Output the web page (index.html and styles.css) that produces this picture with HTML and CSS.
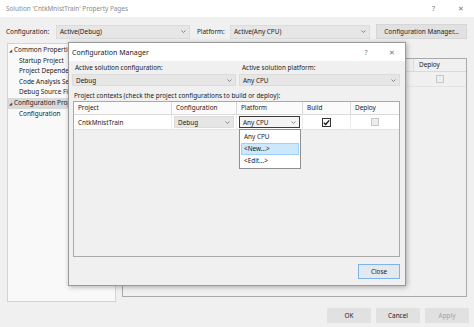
FILE: index.html
```html
<!DOCTYPE html>
<html lang="en">
<head>
  <meta charset="UTF-8" />
  <title>Solution 'CntkMnistTrain' Property Pages</title>
  <link rel="stylesheet" href="styles.css">
</head>
<body>

  <!-- Ventana de propiedades -->
  <div class="ventana">
    <div class="barra-titulo">
      <span class="titulo">Solution 'CntkMnistTrain' Property Pages</span>
      <span class="btn-caption">?</span>
      <span class="btn-caption">&#x2715;</span>
    </div>

    <div class="barra-config">
      <span class="etiqueta">Configuration:</span>
      <div class="combo combo-config">
        <span>Active(Debug)</span>
        <svg class="chevron" width="5" height="3" viewBox="0 0 5 3"><polyline points="0.5,0.5 2.5,2.5 4.5,0.5"/></svg>
      </div>
      <span class="etiqueta etiqueta-plataforma">Platform:</span>
      <div class="combo combo-plataforma">
        <span>Active(Any CPU)</span>
        <svg class="chevron" width="5" height="3" viewBox="0 0 5 3"><polyline points="0.5,0.5 2.5,2.5 4.5,0.5"/></svg>
      </div>
      <button class="boton boton-manager">Configuration Manager...</button>
    </div>

    <div class="paneles">
      <ul class="arbol">
        <li class="nodo"><span class="flecha">&#x25E2;</span>Common Properties</li>
        <li class="hoja">Startup Project</li>
        <li class="hoja">Project Dependencies</li>
        <li class="hoja">Code Analysis Settings</li>
        <li class="hoja">Debug Source Files</li>
        <li class="nodo seleccionado"><span class="flecha">&#x25E2;</span>Configuration Properties</li>
        <li class="hoja">Configuration</li>
      </ul>

      <!-- Tabla de fondo, casi toda tapada por el dialogo -->
      <div class="pagina">
        <div class="tabla-fondo">
          <div class="celda-fondo"></div>
          <div class="celda-fondo"></div>
          <div class="celda-fondo"></div>
          <div class="celda-fondo"></div>
          <div class="celda-fondo ultima">Deploy</div>
          <div class="fila-fondo"></div>
          <div class="fila-fondo"></div>
          <div class="fila-fondo"></div>
          <div class="fila-fondo"></div>
          <div class="fila-fondo ultima"><span class="check check-off"></span></div>
        </div>
      </div>
    </div>

    <div class="pie">
      <button class="boton">OK</button>
      <button class="boton">Cancel</button>
      <button class="boton deshabilitado">Apply</button>
    </div>
  </div>

  <!-- Dialogo Configuration Manager -->
  <div class="dialogo">
    <div class="dialogo-titulo">
      <span class="titulo">Configuration Manager</span>
      <span class="btn-caption">?</span>
      <span class="btn-caption">&#x2715;</span>
    </div>

    <div class="dialogo-cuerpo">
      <div class="columnas">
        <div class="columna">
          <span class="etiqueta-campo">Active solution configuration:</span>
          <div class="combo">
            <span>Debug</span>
            <svg class="chevron" width="5" height="3" viewBox="0 0 5 3"><polyline points="0.5,0.5 2.5,2.5 4.5,0.5"/></svg>
          </div>
        </div>
        <div class="columna">
          <span class="etiqueta-campo">Active solution platform:</span>
          <div class="combo">
            <span>Any CPU</span>
            <svg class="chevron" width="5" height="3" viewBox="0 0 5 3"><polyline points="0.5,0.5 2.5,2.5 4.5,0.5"/></svg>
          </div>
        </div>
      </div>

      <span class="etiqueta-contextos">Project contexts (check the project configurations to build or deploy):</span>

      <div class="tabla">
        <div class="cabecera">Project</div>
        <div class="cabecera">Configuration</div>
        <div class="cabecera">Platform</div>
        <div class="cabecera">Build</div>
        <div class="cabecera ultima">Deploy</div>

        <div class="celda">CntkMnistTrain</div>
        <div class="celda">
          <div class="combo combo-celda">
            <span>Debug</span>
            <svg class="chevron" width="5" height="3" viewBox="0 0 5 3"><polyline points="0.5,0.5 2.5,2.5 4.5,0.5"/></svg>
          </div>
        </div>
        <div class="celda celda-plataforma">
          <div class="combo combo-celda abierto">
            <span>Any CPU</span>
            <svg class="chevron" width="5" height="3" viewBox="0 0 5 3"><polyline points="0.5,0.5 2.5,2.5 4.5,0.5"/></svg>
          </div>
          <ul class="lista">
            <li>Any CPU</li>
            <li class="resaltado">&lt;New...&gt;</li>
            <li>&lt;Edit...&gt;</li>
          </ul>
        </div>
        <div class="celda centrada">
          <span class="check">
            <svg width="7" height="7" viewBox="0 0 7 7"><path d="M0.8 3.6 L2.7 5.5 L6.2 1.3"/></svg>
          </span>
        </div>
        <div class="celda centrada ultima"><span class="check check-off"></span></div>
      </div>

      <div class="acciones">
        <button class="boton boton-cerrar">Close</button>
      </div>
    </div>
  </div>

</body>
</html>
```

FILE: styles.css
```css
body {
  margin: 0;
  width: 474px;
  height: 327px;
  overflow: hidden;
  position: relative;
  background: #f0f0f0;
  font-family: 'Noto Sans', 'Liberation Sans', sans-serif;
  font-size: 6.4px;
  color: #1a1a1a;
}

ul {
  margin: 0;
  padding: 0;
  list-style: none;
}

.ventana {
  display: flex;
  flex-direction: column;
  height: 100%;
}

/* Barras de titulo */
.barra-titulo,
.dialogo-titulo {
  display: flex;
  align-items: center;
  background: #fff;
}

.barra-titulo {
  height: 17px;
  padding-left: 6px;
}

.titulo {
  flex: 1;
}

.barra-titulo .titulo {
  color: #8a8a8a;
}

.btn-caption {
  width: 27px;
  text-align: center;
  color: #777;
  font-size: 7px;
}

/* Fila de configuracion */
.barra-config {
  display: flex;
  align-items: center;
  height: 15px;
  margin-top: 7px;
  padding-left: 6px;
}

.etiqueta {
  width: 50px;
}

.etiqueta-plataforma {
  width: 33px;
  margin-left: 7px;
}

.combo {
  display: flex;
  align-items: center;
  justify-content: space-between;
  box-sizing: border-box;
  height: 12px;
  padding: 0 3px 0 3px;
  background: #e6e6e6;
  border: 1px solid #dcdcdc;
}

.barra-config .combo {
  height: 14px;
}

.combo-config {
  width: 134px;
}

.combo-plataforma {
  width: 140px;
}

.chevron {
  fill: none;
  stroke: #7a7a7a;
  stroke-width: 0.9;
}

.boton {
  box-sizing: border-box;
  height: 15px;
  padding: 0;
  font-family: inherit;
  font-size: 6.4px;
  color: #1a1a1a;
  background: #e1e1e1;
  border: 1px solid #d6d6d6;
}

.boton-manager {
  width: 91px;
  height: 15px;
  margin-left: 6px;
}

/* Paneles */
.paneles {
  display: flex;
  gap: 6px;
  height: 259px;
  margin-top: 4px;
  padding-left: 7px;
}

.arbol {
  box-sizing: border-box;
  width: 109px;
  padding-top: 1px;
  background: #f9f9f9;
  border: 1px solid #d4d4d4;
  white-space: nowrap;
  overflow: hidden;
}

.arbol li {
  height: 10.6px;
  line-height: 10.6px;
}

.nodo {
  padding-left: 1px;
}

.flecha {
  display: inline-block;
  width: 5px;
  font-size: 4px;
  color: #444;
}

.hoja {
  padding-left: 11px;
}

.seleccionado {
  background: #d9d9d9;
}

.pagina {
  width: 345px;
  height: 254px;
  padding-top: 15px;
  box-sizing: border-box;
}

.tabla-fondo {
  display: grid;
  grid-template-columns: 98px 65px 66px 62px 1fr;
  grid-template-rows: 13px 15px;
  height: 100%;
  box-sizing: border-box;
  border: 1px solid #a9a9a9;
  align-content: start;
}

.celda-fondo {
  padding-left: 5px;
  line-height: 12px;
  border-right: 1px solid #dadada;
  border-bottom: 1px solid #dadada;
}

.fila-fondo {
  display: flex;
  align-items: center;
  justify-content: center;
  border-bottom: 1px solid #e4e4e4;
}

.celda-fondo.ultima,
.cabecera.ultima,
.celda.ultima {
  border-right: none;
}

/* Pie */
.pie {
  display: flex;
  justify-content: flex-end;
  gap: 5px;
  margin-top: 6px;
  padding-right: 5px;
}

.pie .boton {
  width: 44px;
  border-color: #e1e1e1;
}

.deshabilitado {
  color: #a3a3a3;
}

/* Dialogo */
.dialogo {
  position: absolute;
  left: 68px;
  top: 42px;
  width: 338px;
  height: 244px;
  box-sizing: border-box;
  border: 1px solid #9a9a9a;
  background: #f0f0f0;
  box-shadow: 1px 1px 5px rgba(0, 0, 0, 0.3);
  display: flex;
  flex-direction: column;
}

.dialogo-titulo {
  height: 18px;
  padding-left: 3px;
  font-size: 7px;
}

.dialogo-titulo .btn-caption {
  width: 26px;
}

.dialogo-cuerpo {
  display: flex;
  flex-direction: column;
  padding: 2px 5px 0 3px;
}

.columnas {
  display: flex;
  gap: 3px;
}

.columna {
  display: flex;
  flex-direction: column;
  gap: 2px;
}

.columna:first-child {
  width: 164px;
}

.columna:last-child {
  flex: 1;
}

.etiqueta-campo {
  line-height: 9px;
  padding-left: 3px;
}

.etiqueta-contextos {
  line-height: 9px;
  margin-top: 5px;
  padding-left: 2px;
}

.tabla {
  display: grid;
  grid-template-columns: 98px 65px 66px 48px 1fr;
  grid-template-rows: 13px 15px;
  align-content: start;
  height: 156px;
  margin: 1px 0 0 1px;
  box-sizing: border-box;
  border: 1px solid #a9a9a9;
}

.cabecera {
  padding-left: 4px;
  line-height: 12px;
  background: #fbfbfb;
  border-right: 1px solid #dadada;
  border-bottom: 1px solid #dadada;
}

.celda {
  display: flex;
  align-items: center;
  background: #fff;
  padding-left: 4px;
  border-right: 1px solid #ececec;
  border-bottom: 1px solid #e4e4e4;
}

.celda:nth-child(7),
.celda-plataforma {
  padding-left: 2px;
  padding-right: 2px;
}

.celda-plataforma {
  position: relative;
}

.centrada {
  justify-content: center;
  padding-left: 0;
}

.combo-celda {
  width: 100%;
  height: 12px;
}

.combo-celda.abierto {
  background: #f4f4f4;
  border-color: #3c3c3c;
}

.check {
  display: flex;
  align-items: center;
  justify-content: center;
  box-sizing: border-box;
  width: 9px;
  height: 9px;
  background: #fff;
  border: 1px solid #333;
}

.check svg {
  fill: none;
  stroke: #111;
  stroke-width: 1.3;
}

.check-off {
  width: 8px;
  height: 8px;
  background: #ededed;
  border-color: #c8c8c8;
}

/* Lista desplegada */
.lista {
  position: absolute;
  left: 2px;
  top: 100%;
  width: 62px;
  box-sizing: border-box;
  padding: 1px 1px 1px;
  background: #fff;
  border: 1px solid #8f8f8f;
  z-index: 2;
}

.lista li {
  height: 12px;
  line-height: 10px;
  padding-left: 2px;
  box-sizing: border-box;
  border: 1px solid transparent;
}

.lista .resaltado {
  background: #cce8ff;
  border-color: #99d1ff;
}

.acciones {
  display: flex;
  justify-content: flex-end;
  margin-top: 7px;
}

.boton-cerrar {
  width: 42px;
  background: #e3e9ee;
  border-color: #7eb4ea;
}
```
